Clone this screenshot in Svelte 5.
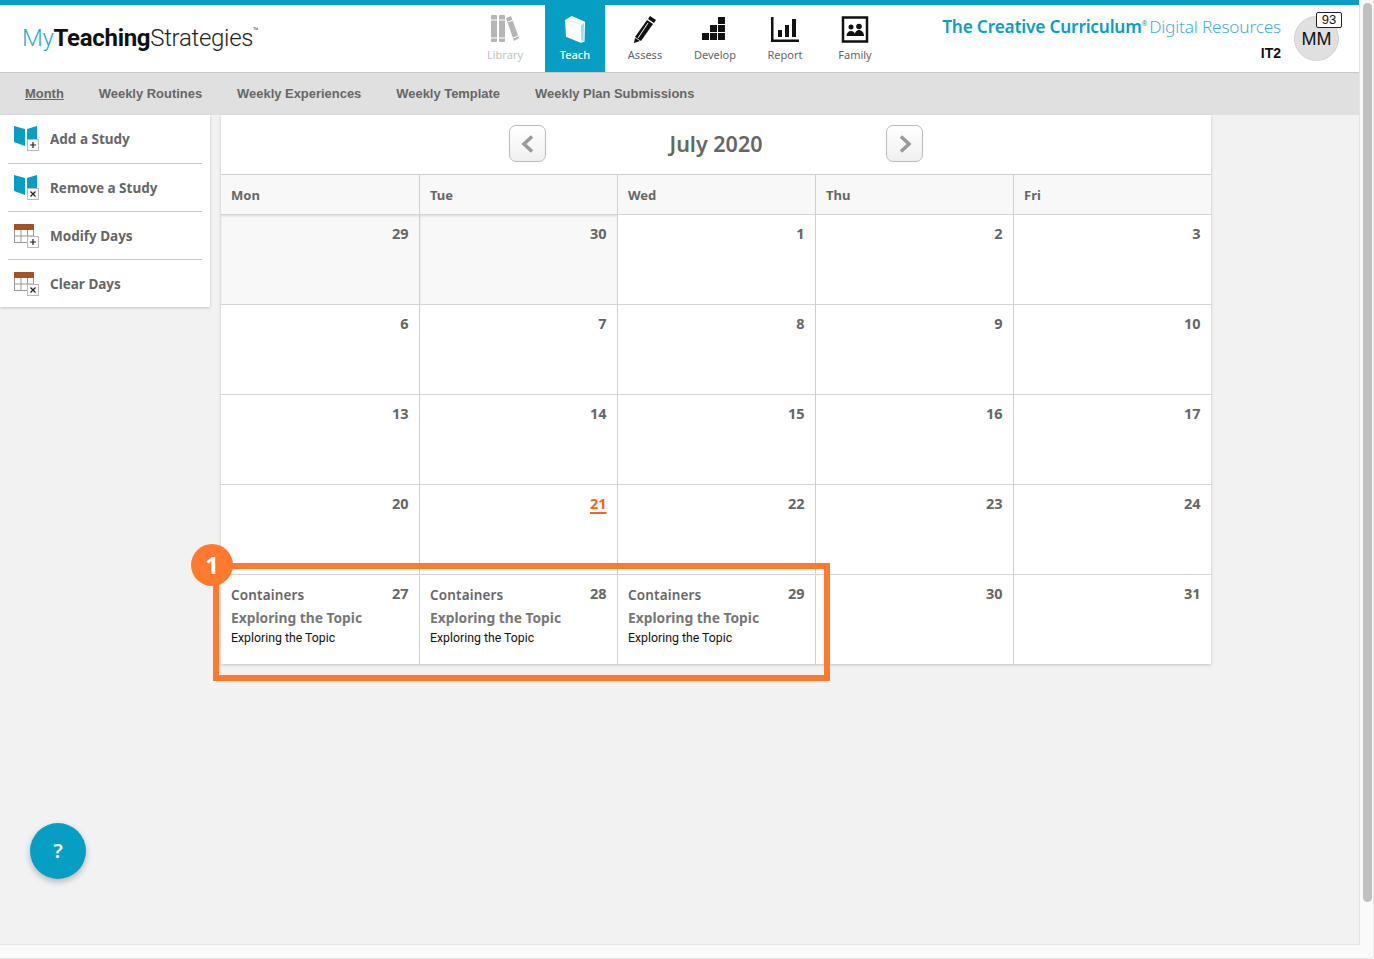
<script>
  const tabs = ["Month", "Weekly Routines", "Weekly Experiences", "Weekly Template", "Weekly Plan Submissions"];
  const days = ["Mon", "Tue", "Wed", "Thu", "Fri"];
  const weeks = [
    [29, 30, 1, 2, 3],
    [6, 7, 8, 9, 10],
    [13, 14, 15, 16, 17],
    [20, 21, 22, 23, 24],
    [27, 28, 29, 30, 31]
  ];
  const side = ["Add a Study", "Remove a Study", "Modify Days", "Clear Days"];

  // the planned days in the last row
  function hasPlan(w, d) {
    return w === 4 && d < 3;
  }
</script>

<div class="window">
  <div class="page">
    <header class="top">
      <div class="logo"><span class="my">My</span><b>Teaching</b><span>Strategies</span><sup>™</sup></div>
      <nav class="apps">
        <div class="app muted">
          <svg width="30" height="30" viewBox="0 0 30 30">
            <g fill="#b5b5b5">
              <rect x="1" y="1" width="6" height="27" rx="1" />
              <rect x="9" y="1" width="6" height="27" rx="1" />
              <path d="M16 4l5-2 8 22-5 3z" />
            </g>
            <g stroke="#fff" stroke-width="1"><path d="M1 6h6M9 6h6M1 24h6M9 24h6M18 8l5-2M23 24l5-2" /></g>
          </svg>
          <span>Library</span>
        </div>
        <div class="app active">
          <svg width="30" height="30" viewBox="0 0 30 30">
            <path d="M5 6l6.700-4L25 7.700l-.5 20-4 1L6 22.700z" fill="#fff" />
            <path d="M21 11.500l3-2.500-.4 17.800-2.300.6z" fill="#9adcec" />
            <path d="M7 6l5-2.500 10 4.500-2 2z" fill="#fff" stroke="#cdeef7" stroke-width="0.6" />
          </svg>
          <span>Teach</span>
        </div>
        <div class="app">
          <svg width="30" height="30" viewBox="0 0 30 30">
            <path d="M20 2l6 4-2 3-6-4z" fill="#111" />
            <path d="M17 6l6 4-12 17-6-4z" fill="#111" />
            <path d="M5 24l5 3-6 2z" fill="#111" />
            <path d="M18 9l-10 15" stroke="#fff" stroke-width="1" />
          </svg>
          <span>Assess</span>
        </div>
        <div class="app">
          <svg width="30" height="30" viewBox="0 0 30 30">
            <g fill="#111">
              <rect x="18" y="3" width="7" height="7" />
              <rect x="10" y="11" width="7" height="7" /><rect x="18" y="11" width="7" height="7" />
              <rect x="2" y="19" width="7" height="7" /><rect x="10" y="19" width="7" height="7" /><rect x="18" y="19" width="7" height="7" />
            </g>
          </svg>
          <span>Develop</span>
        </div>
        <div class="app">
          <svg width="30" height="30" viewBox="0 0 30 30">
            <g fill="#111">
              <rect x="1" y="3" width="2.5" height="25" />
              <rect x="1" y="25.500" width="28" height="2.500" />
              <rect x="8" y="16" width="4" height="7" />
              <rect x="15" y="11" width="4" height="12" />
              <rect x="22" y="5" width="4" height="18" />
            </g>
          </svg>
          <span>Report</span>
        </div>
        <div class="app">
          <svg width="30" height="30" viewBox="0 0 30 30">
            <rect x="3" y="3.500" width="24" height="24" fill="none" stroke="#111" stroke-width="2.500" />
            <g fill="#111">
              <circle cx="11" cy="13" r="2.500" />
              <path d="M6.500 22c0-3 2-5 4.500-5s4.500 2 4.500 5z" />
              <circle cx="19" cy="12.500" r="2.800" />
              <path d="M14.500 22c0-3.500 2-6 4.500-6s5 2.500 5 6z" />
            </g>
          </svg>
          <span>Family</span>
        </div>
      </nav>
      <div class="product">
        <div class="title"><b>The Creative Curriculum</b><sup>®</sup><span>Digital Resources</span></div>
        <div class="cls">IT2</div>
      </div>
      <div class="avatar">MM<span class="count">93</span></div>
    </header>

    <nav class="tabs">
      {#each tabs as t, i}
        <span class:current={i === 0}>{t}</span>
      {/each}
    </nav>

    <div class="body">
      <aside class="side">
        {#each side as s, i}
          <div class="side-item">
            {#if i < 2}
              <svg class="side-icon" width="28" height="28" viewBox="0 0 28 28">
                <path d="M1 1l11 3v17l-11-4z" fill="#069fc3" />
                <path d="M14 4l10-3v15l-10 5z" fill="#069fc3" />
                <rect x="14.500" y="14.500" width="11" height="11" fill="#fafafa" stroke="#bbb" />
                {#if i === 0}
                  <path d="M17 20h6M20 17v6" stroke="#222" stroke-width="1.200" />
                {:else}
                  <path d="M17.500 17.500l5 5M22.500 17.500l-5 5" stroke="#222" stroke-width="1.200" />
                {/if}
              </svg>
            {:else}
              <svg class="side-icon" width="28" height="28" viewBox="0 0 28 28">
                <rect x="1.500" y="2.500" width="19" height="18" fill="#fff" stroke="#999" />
                <rect x="1" y="2" width="20" height="6" fill="#a3522a" />
                <path d="M8 8v12M14.500 8v12M2 14h18" stroke="#999" />
                <rect x="14.500" y="14.500" width="11" height="11" fill="#fafafa" stroke="#bbb" />
                {#if i === 2}
                  <path d="M17 20h6M20 17v6" stroke="#222" stroke-width="1.200" />
                {:else}
                  <path d="M17.500 17.500l5 5M22.500 17.500l-5 5" stroke="#222" stroke-width="1.200" />
                {/if}
              </svg>
            {/if}
            <span>{s}</span>
          </div>
        {/each}
      </aside>

      <main class="calendar">
        <div class="cal-head">
          <button class="arrow" aria-label="Previous month">
            <svg width="14" height="18" viewBox="0 0 14 18"><path d="M11 1.500L3 9l8 7.500" fill="none" stroke="#999" stroke-width="3.500" /></svg>
          </button>
          <h2>July 2020</h2>
          <button class="arrow" aria-label="Next month">
            <svg width="14" height="18" viewBox="0 0 14 18"><path d="M3 1.500L11 9l-8 7.500" fill="none" stroke="#999" stroke-width="3.500" /></svg>
          </button>
        </div>
        <div class="grid">
          {#each days as d}
            <div class="dow">{d}</div>
          {/each}
          {#each weeks as week, w}
            {#each week as n, d}
              <div class="cell" class:past={w === 0 && d < 2}>
                <span class="num" class:today={w === 3 && d === 1}>{n}</span>
                {#if hasPlan(w, d)}
                  <div class="plan">
                    <div class="study">Containers</div>
                    <div class="phase">Exploring the Topic</div>
                    <div class="topic">Exploring the Topic</div>
                  </div>
                {/if}
              </div>
            {/each}
          {/each}
        </div>
      </main>
    </div>

    <div class="callout"></div>
    <div class="marker">1</div>
    <div class="help">?</div>
  </div>
  <div class="scrollbar"><div class="thumb"></div></div>
</div>

<style>
  :global(body) {
    margin: 0;
    background: #fff;
    font-family: "Noto Sans", "Open Sans", sans-serif;
  }

  .window {
    position: relative;
    display: flex;
    width: 1374px;
    height: 959px;
    overflow: hidden;
    background: #fafafa;
    box-sizing: border-box;
    border-right: 1px solid #e8e8e8;
    border-bottom: 1px solid #e8e8e8;
    border-radius: 0 0 4px 0;
  }

  .page {
    position: relative;
    flex: none;
    width: 1360px;
    height: 945px;
    background: #f2f2f2;
    border-right: 1px solid #e4e4e4;
    border-bottom: 1px solid #e4e4e4;
    box-sizing: border-box;
  }

  .top {
    display: flex;
    align-items: stretch;
    height: 67px;
    background: #fff;
    border-top: 5px solid #069fc3;
    border-bottom: 1px solid #c9c9c9;
  }

  .logo {
    width: 475px;
    padding: 16px 0 0 22px;
    box-sizing: border-box;
    font-family: Roboto, "Liberation Sans", sans-serif;
    font-size: 24px;
    font-weight: 300;
    letter-spacing: -0.3px;
    color: #222;
    line-height: 34px;
    white-space: nowrap;
  }

  .logo .my {
    color: #2aa9d8;
  }

  .logo b {
    color: #111;
    font-weight: 700;
  }

  .logo sup {
    font-size: 9px;
    vertical-align: 12px;
    line-height: 0;
  }

  .apps {
    display: flex;
  }

  .app {
    width: 60px;
    margin-right: 10px;
    display: flex;
    flex-direction: column;
    align-items: center;
    padding-top: 9px;
    box-sizing: border-box;
    font-size: 11px;
    color: #666;
  }

  .app svg {
    display: block;
    height: 30px;
    margin-bottom: 3px;
  }

  .app span {
    line-height: 16px;
  }

  .app.muted {
    color: #c4c4c4;
  }

  .app.active {
    background: #069fc3;
    color: #fff;
    font-weight: 500;
  }

  .product {
    margin-left: auto;
    padding-top: 8px;
    text-align: right;
    color: #069fc3;
    white-space: nowrap;
  }

  .title {
    font-size: 17.300px;
    line-height: 27px;
    letter-spacing: -0.2px;
  }

  .title b {
    font-weight: 600;
  }

  .title span {
    font-weight: 300;
    color: #3fb0cf;
  }

  .title sup {
    font-size: 7px;
    line-height: 0;
    margin-right: 2px;
  }

  .cls {
    margin-top: 5px;
    font-family: "Liberation Sans", Arial, sans-serif;
    font-size: 14px;
    font-weight: 700;
    line-height: 16px;
    color: #111;
  }

  .avatar {
    position: relative;
    width: 45px;
    height: 45px;
    margin: 11px 20px 0 13px;
    border-radius: 50%;
    background: #e0e0e0;
    border: 1px solid #d2d2d2;
    box-sizing: border-box;
    font-family: "Liberation Sans", Arial, sans-serif;
    font-size: 18px;
    line-height: 45px;
    text-align: center;
    color: #111;
  }

  .count {
    position: absolute;
    top: -5px;
    right: -4px;
    width: 26px;
    height: 16px;
    background: #fff;
    border: 1px solid #222;
    border-radius: 2px;
    box-sizing: border-box;
    font-size: 13px;
    line-height: 14px;
  }

  .tabs {
    display: flex;
    gap: 35px;
    height: 42px;
    padding: 0 0 1px 25px;
    box-sizing: border-box;
    align-items: center;
    background: #e0e0e0;
    font-family: "Liberation Sans", Arial, sans-serif;
    font-size: 12.950px;
    font-weight: 700;
    color: #666;
  }

  .current {
    text-decoration: underline;
  }

  .body {
    display: flex;
    align-items: flex-start;
  }

  .side {
    width: 210px;
    height: 192px;
    margin-right: 11px;
    padding: 0 8px;
    box-sizing: border-box;
    background: #fff;
    box-shadow: 0 1px 3px rgba(0, 0, 0, 0.2);
  }

  .side-item {
    display: flex;
    align-items: center;
    height: 48px;
    padding-left: 5px;
    box-sizing: border-box;
    border-bottom: 1px solid #c8c8c8;
    font-size: 13.500px;
    font-weight: 700;
    color: #666;
  }

  .side-item:first-child {
    height: 49px;
  }

  .side-item:last-child {
    height: 47px;
    border-bottom: 0;
  }

  .side-icon {
    width: 28px;
    height: 28px;
    margin-right: 9px;
    flex: none;
  }

  .calendar {
    width: 990px;
    background: #fff;
    box-shadow: 0 1px 3px rgba(0, 0, 0, 0.2);
  }

  .cal-head {
    display: flex;
    align-items: center;
    justify-content: center;
    height: 59px;
    padding-bottom: 2px;
    box-sizing: border-box;
  }

  .cal-head h2 {
    width: 340px;
    margin: 0;
    text-align: center;
    font-size: 21.500px;
    font-weight: 600;
    color: #666;
  }

  .arrow {
    display: flex;
    align-items: center;
    justify-content: center;
    width: 37px;
    height: 37px;
    padding: 0;
    border: 1px solid #bbb;
    border-radius: 7px;
    background: linear-gradient(#fff, #f0f0f0);
  }

  .grid {
    display: grid;
    grid-template-columns: 199px 198px 198px 198px 197px;
    grid-template-rows: 40px;
    grid-auto-rows: 90px;
  }

  .dow {
    padding: 11px 10px 0;
    box-sizing: border-box;
    background: #f8f8f8;
    border-top: 1px solid #cfcfcf;
    border-right: 1px solid #cfcfcf;
    font-size: 13px;
    font-weight: 700;
    color: #666;
  }

  .dow:nth-child(5) {
    border-right: 0;
  }

  .cell {
    position: relative;
    padding: 0 10px;
    box-sizing: border-box;
    border-top: 1px solid #d4d4d4;
    border-right: 1px solid #cfcfcf;
  }

  .cell:nth-child(5n) {
    border-right: 0;
  }

  .cell.past {
    background: #f8f8f8;
    box-shadow: inset 0 3px 3px -2px rgba(0, 0, 0, 0.12), inset 2px 0 2px -2px rgba(0, 0, 0, 0.12);
  }

  .num {
    position: absolute;
    top: 9px;
    right: 10.500px;
    font-size: 14.500px;
    line-height: 19px;
    font-weight: 700;
    color: #666;
  }

  .num.today {
    color: #f26522;
    text-decoration: underline;
    text-decoration-thickness: 2px;
    text-underline-offset: 3px;
  }

  .plan {
    padding-top: 11px;
  }

  .study {
    font-size: 13.500px;
    font-weight: 600;
    line-height: 19px;
    letter-spacing: 0.15px;
    color: #666;
  }

  .phase {
    margin-top: 3px;
    font-size: 13.800px;
    font-weight: 700;
    line-height: 20px;
    color: #777;
  }

  .topic {
    font-family: Roboto, "Noto Sans", sans-serif;
    font-size: 12.300px;
    line-height: 20px;
    color: #111;
  }

  .callout {
    position: absolute;
    left: 213px;
    top: 563px;
    width: 617px;
    height: 118px;
    border: 6px solid #ff7a2f;
    box-sizing: border-box;
  }

  .marker {
    position: absolute;
    left: 191px;
    top: 544px;
    width: 42px;
    height: 42px;
    border-radius: 50%;
    background: #ff7a2f;
    color: #fff;
    font-size: 24px;
    font-weight: 700;
    line-height: 42px;
    text-align: center;
  }

  .help {
    position: absolute;
    left: 30px;
    top: 823px;
    width: 56px;
    height: 56px;
    border-radius: 50%;
    background: #069fc3;
    box-shadow: 0 3px 6px rgba(0, 0, 0, 0.25);
    color: #fff;
    font-size: 20px;
    font-weight: 600;
    line-height: 56px;
    text-align: center;
  }

  .scrollbar {
    flex: 1;
    padding: 3px 0 0 3px;
  }

  .thumb {
    width: 9px;
    height: 899px;
    border-radius: 5px;
    background: #c0c0c0;
  }
</style>
